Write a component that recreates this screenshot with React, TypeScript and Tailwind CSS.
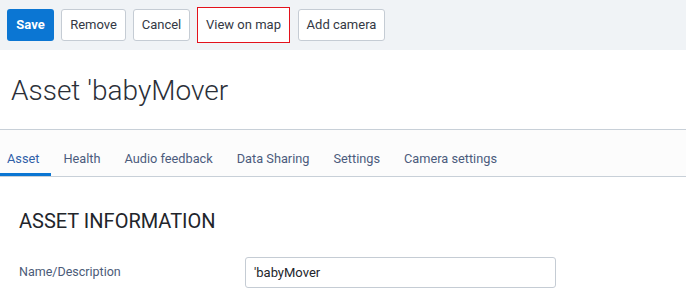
import React from 'react';

const tabs = ['Asset', 'Health', 'Audio feedback', 'Data Sharing', 'Settings', 'Camera settings'];

const btn =
  'h-[32px] rounded-[3px] border border-[#c5ccd4] bg-white text-[13px] text-[#333844] flex items-center justify-center';

export default function App() {
  return (
    <div className="w-[686px] h-[294px] overflow-hidden bg-white font-['Roboto',sans-serif]">
      {/* Toolbar */}
      <div className="h-[50px] bg-[#f0f3f6] flex items-center pl-[7px]">
        <button className="h-[32px] w-[47px] rounded-[3px] bg-[#0b76d3] text-white text-[13px] font-bold">
          Save
        </button>
        <button className={`${btn} w-[65px] ml-[7px]`}>Remove</button>
        <button className={`${btn} w-[57px] ml-[7px]`}>Cancel</button>
        <button className="h-[36px] w-[93px] ml-[7px] border border-[#e3121c] bg-white text-[13px] text-[#333844]">
          View on map
        </button>
        <button className={`${btn} w-[87px] ml-[8px]`}>Add camera</button>
      </div>

      {/* Header */}
      <div className="h-[80px] border-b border-[#c8d0d8] flex items-center pl-[11px] pt-[3px]">
        <h1 className="text-[28px] font-light text-[#2b2f38] leading-none">Asset 'babyMover</h1>
      </div>

      {/* Tabs */}
      <div className="h-[47px] bg-[#fcfcfc] border-b border-[#c8d0d8] flex items-stretch">
        {tabs.map((t, i) => (
          <div
            key={t}
            className={`flex items-center pt-[15px] text-[12.75px] border-b-[3px] ${
              i === 0
                ? 'pl-[7px] pr-[12px] text-[#2f5fa8] border-[#0b76d3]'
                : 'px-3 text-[#4b5b7c] border-transparent'
            }`}
          >
            {t}
          </div>
        ))}
      </div>

      {/* Content */}
      <div className="pl-[19px] pt-[34px]">
        <h2 className="text-[20px] leading-none text-[#22252b]">ASSET INFORMATION</h2>
        <div className="flex items-center mt-[26px]">
          <div className="w-[226px] text-[12.5px] text-[#4b5b78]">Name/Description</div>
          <div className="w-[311px] h-[31px] rounded-[3px] border border-[#c5ccd4] flex items-center pl-[8px] text-[13px] text-[#22252b]">
            'babyMover
          </div>
        </div>
      </div>
    </div>
  );
}
